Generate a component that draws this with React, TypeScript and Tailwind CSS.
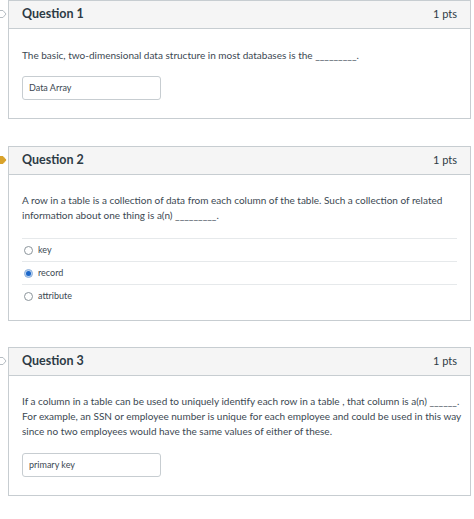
import type { ReactNode } from 'react';

const Marker = ({ filled }: { filled?: boolean }) => (
  <svg width="8" height="10" viewBox="0 0 8 10" className="shrink-0">
    <path
      d="M-2 1.5 H3 L6 5 L3 8.5 H-2 Z"
      fill={filled ? '#d9a32b' : 'none'}
      stroke={filled ? '#d9a32b' : '#b5bcc2'}
      strokeWidth="1"
    />
  </svg>
);

interface QuestionCardProps {
  number: number;
  flagged?: boolean;
  children: ReactNode;
}

const QuestionCard = ({ number, flagged, children }: QuestionCardProps) => (
  <div className="flex items-start">
    <div className="w-2 h-[28px] flex items-center">
      <Marker filled={flagged} />
    </div>
    <div className="flex-1 border border-[#c7cdd1] bg-white">
      <div className="h-[28px] bg-[#f5f5f5] border-b border-[#c7cdd1] flex items-center justify-between pl-[13px] pr-[13px]">
        <span className="text-[12.5px] font-bold text-[#2d3b45]">Question {number}</span>
        <span className="text-[11px] text-[#2d3b45]">1 pts</span>
      </div>
      <div className="pl-[13px] pr-[6px]">{children}</div>
    </div>
  </div>
);

const AnswerBox = ({ value }: { value: string }) => (
  <div className="w-[139px] h-[24px] border border-[#c7cdd1] rounded-[3px] flex items-center px-[6px] text-[9px] text-[#3b4852]">
    {value}
  </div>
);

const Option = ({ label, checked }: { label: string; checked?: boolean }) => (
  <div className="h-[23px] border-t border-[#e6e9eb] flex items-center pl-[2px] gap-[5px]">
    {checked ? (
      <span className="w-[9px] h-[9px] rounded-full bg-[#b8d1ef] border border-[#8fb2dd] flex items-center justify-center">
        <span className="w-[5px] h-[5px] rounded-full bg-[#1a66c9]" />
      </span>
    ) : (
      <span className="w-[9px] h-[9px] rounded-full border border-[#8c959b] bg-white" />
    )}
    <span className="text-[9px] text-[#3b4852]">{label}</span>
  </div>
);

export default function App() {
  return (
    <div
      className="w-[474px] h-[519px] bg-white overflow-hidden pr-[3px] flex flex-col"
      style={{ fontFamily: 'Lato, "Open Sans", sans-serif' }}
    >
      <QuestionCard number={1}>
        <p className="pt-[19px] text-[10px] leading-[15px] text-[#3b4852]">
          The basic, two-dimensional data structure in most databases is the _________.
        </p>
        <div className="pt-[13px] pb-[18px]">
          <AnswerBox value="Data Array" />
        </div>
      </QuestionCard>

      <div className="h-[27px]" />

      <QuestionCard number={2} flagged>
        <p className="pt-[18px] text-[10px] leading-[15px] text-[#3b4852] pr-[7px]">
          A row in a table is a collection of data from each column of the table. Such a collection of related
          information about one thing is a(n) _________.
        </p>
        <div className="pt-[15px] pb-[13px] mr-[7px]">
          <Option label="key" />
          <Option label="record" checked />
          <Option label="attribute" />
        </div>
      </QuestionCard>

      <div className="h-[26px]" />

      <QuestionCard number={3}>
        <p className="pt-[18px] text-[10px] leading-[15px] text-[#3b4852]">
          If a column in a table can be used to uniquely identify each row in a table , that column is a(n) ______.
          For example, an SSN or employee number is unique for each employee and could be used in this way since
          no two employees would have the same values of either of these.
        </p>
        <div className="pt-[14px] pb-[18px]">
          <AnswerBox value="primary key" />
        </div>
      </QuestionCard>
    </div>
  );
}
